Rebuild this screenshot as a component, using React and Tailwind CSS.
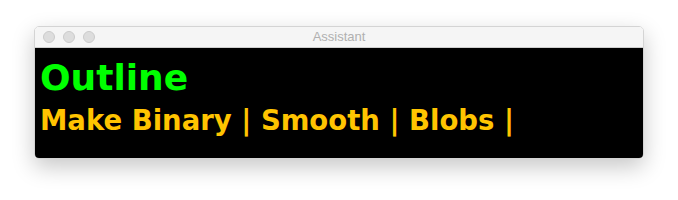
import React from 'react';

export default function App() {
  return (
    <div className="w-[678px] h-[200px] bg-white pt-[26px] pl-[34px]">
      <div className="w-[610px] rounded-[5px] overflow-hidden shadow-[0_8px_22px_rgba(0,0,0,0.22)] border border-[#d4d4d4]">
        <div className="relative h-[21px] bg-[#f5f5f5] border-b border-[#cfcfcf] flex items-center">
          <div className="flex gap-[8px] pl-[8px]">
            <span className="w-[12px] h-[12px] rounded-full bg-[#dddddd] border border-[#cbcbcb]" />
            <span className="w-[12px] h-[12px] rounded-full bg-[#dddddd] border border-[#cbcbcb]" />
            <span className="w-[12px] h-[12px] rounded-full bg-[#dddddd] border border-[#cbcbcb]" />
          </div>
          <div className="absolute inset-0 flex items-center justify-center text-[13px] text-[#b0b0b0]" style={{ fontFamily: '"Liberation Sans", Arial, sans-serif' }}>
            Assistant
          </div>
        </div>
        <div className="bg-black h-[110px] pl-[5px] pt-[8px] font-bold" style={{ fontFamily: '"DejaVu Sans", Verdana, sans-serif' }}>
          <div className="text-[36px] leading-[44px] text-[#00ff00]">Outline</div>
          <div className="mt-[3px] text-[27.5px] leading-[34px] text-[#ffc400] whitespace-pre">Make Binary | Smooth | Blobs |</div>
        </div>
      </div>
    </div>
  );
}
